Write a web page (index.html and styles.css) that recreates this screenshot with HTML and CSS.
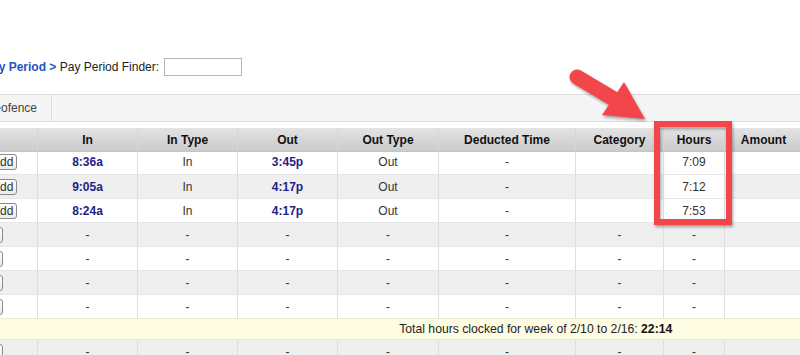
FILE: index.html
```html
<!DOCTYPE html>
<html>
<head>
<meta charset="utf-8">
<link rel="stylesheet" href="styles.css">
</head>
<body>
<div class="page">
  <div class="crumbs"><a class="crumb">Pay Period &gt;</a> Pay Period Finder: <input class="finder" type="text"></div>
  <div class="tabs"><div class="tab">Geofence</div></div>
  <table class="punches">
    <colgroup>
      <col class="c-act"><col class="c-in"><col class="c-in"><col class="c-in"><col class="c-ot"><col class="c-ded"><col class="c-cat"><col class="c-hrs"><col class="c-amt"><col class="c-more">
    </colgroup>
    <thead>
      <tr><th></th><th>In</th><th>In Type</th><th>Out</th><th>Out Type</th><th>Deducted Time</th><th>Category</th><th>Hours</th><th>Amount</th><th>Notes</th></tr>
    </thead>
    <tbody>
      <tr class="r1"><td class="act"><button class="btn">Add</button></td><td class="time">8:36a</td><td>In</td><td class="time">3:45p</td><td>Out</td><td>-</td><td></td><td class="hl">7:09</td><td></td><td></td></tr>
      <tr class="alt"><td class="act"><button class="btn">Add</button></td><td class="time">9:05a</td><td>In</td><td class="time">4:17p</td><td>Out</td><td>-</td><td></td><td class="hl">7:12</td><td></td><td></td></tr>
      <tr><td class="act"><button class="btn">Add</button></td><td class="time">8:24a</td><td>In</td><td class="time">4:17p</td><td>Out</td><td>-</td><td></td><td class="hl">7:53</td><td></td><td></td></tr>
      <tr class="alt"><td class="act"><button class="btn">+</button></td><td>-</td><td>-</td><td>-</td><td>-</td><td>-</td><td>-</td><td>-</td><td></td><td></td></tr>
      <tr><td class="act"><button class="btn">+</button></td><td>-</td><td>-</td><td>-</td><td>-</td><td>-</td><td>-</td><td>-</td><td></td><td></td></tr>
      <tr class="alt"><td class="act"><button class="btn">+</button></td><td>-</td><td>-</td><td>-</td><td>-</td><td>-</td><td>-</td><td>-</td><td></td><td></td></tr>
      <tr><td class="act"><button class="btn">+</button></td><td>-</td><td>-</td><td>-</td><td>-</td><td>-</td><td>-</td><td>-</td><td></td><td></td></tr>
      <tr class="total"><td colspan="10">Total hours clocked for week of 2/10 to 2/16: <b>22:14</b></td></tr>
      <tr class="alt"><td class="act"><button class="btn">+</button></td><td>-</td><td>-</td><td>-</td><td>-</td><td>-</td><td>-</td><td>-</td><td></td><td></td></tr>
    </tbody>
  </table>
  <svg class="annot" width="800" height="355" viewBox="0 0 800 355">
    <g class="mark">
      <line x1="577" y1="77" x2="614" y2="99" stroke="#f2464b" stroke-width="15" stroke-linecap="round"/>
      <polygon points="624,82 602,115 645,119" fill="#f2464b"/>
      <rect x="657" y="124" width="72" height="98" fill="none" stroke="#f2464b" stroke-width="6"/>
    </g>
  </svg>
</div>
</body>
</html>
```
FILE: styles.css
```css
html, body {
  margin: 0;
  padding: 0;
  background: #ffffff;
}
body {
  font-family: "Liberation Sans", Arial, sans-serif;
  font-size: 12px;
  color: #333;
  overflow: hidden;
}
.page {
  position: relative;
  width: 800px;
  height: 355px;
  overflow: hidden;
  padding-top: 58px;
  box-sizing: border-box;
}
.crumbs {
  height: 18px;
  line-height: 18px;
  margin-left: -16px;
  white-space: nowrap;
  color: #222;
  font-size: 12px;
}
.crumb {
  color: #1f55c0;
  font-weight: bold;
  text-decoration: none;
}
.finder {
  box-sizing: border-box;
  width: 78px;
  height: 18px;
  margin: 0 0 0 2px;
  padding: 0 2px;
  border: 1px solid #b5b5b5;
  vertical-align: top;
  font: inherit;
}
.tabs {
  margin-top: 18px;
  height: 26px;
  background: #f5f5f5;
  border-top: 1px solid #dcdcdc;
  border-bottom: 1px solid #dcdcdc;
  display: flex;
}
.tab {
  margin-left: -25px;
  padding: 0 14px 0 10px;
  line-height: 26px;
  color: #444;
  border-right: 1px solid #dcdcdc;
}
.punches {
  margin-top: 6px;
  margin-left: -20px;
  border-collapse: collapse;
  table-layout: fixed;
  width: 1110px;
}
.c-act { width: 57px; }
.c-in { width: 100px; }
.c-ot { width: 101px; }
.c-ded { width: 137px; }
.c-cat { width: 88px; }
.c-hrs { width: 61px; }
.c-amt { width: 78px; }
.c-more { width: 288px; }
.punches th {
  height: 23px;
  padding: 0;
  font-weight: bold;
  color: #111;
  background: linear-gradient(#e3e3e3, #cbcbcb);
  border-left: 1px solid #d6d6d6;
  border-bottom: 1px solid #c4c4c4;
  text-align: center;
  white-space: nowrap;
}
.punches td {
  height: 23px;
  padding: 0;
  text-align: center;
  color: #333;
  border-left: 1px solid #dedede;
  border-top: 1px solid #e6e6e6;
  white-space: nowrap;
}
.punches tr.r1 td {
  height: 20px;
  border-top: none;
  padding-bottom: 2px;
}
.punches tr.alt td {
  background: #efefef;
}
.punches td.act {
  text-align: left;
  padding-left: 7px;
}
.punches td.time {
  color: #1c2388;
  font-weight: bold;
}
.punches tr td.hl {
  background: #ffffff;
}
.punches tr.total td {
  height: 20px;
  background: #fefce2;
  color: #222;
  border-top: 1px solid #ece9cf;
  font-size: 12.2px;
}
.punches tr.total b {
  color: #111;
}
.btn {
  display: block;
  box-sizing: border-box;
  height: 16px;
  padding: 0 3px;
  margin: 0;
  border: 1px solid #8a8a8a;
  border-radius: 3px;
  background: linear-gradient(#ffffff, #ececec);
  font-family: "Liberation Sans", Arial, sans-serif;
  font-size: 12px;
  line-height: 14px;
  color: #333;
}
.annot {
  position: absolute;
  top: 0;
  left: 0;
  pointer-events: none;
}
.mark {
  filter: drop-shadow(1px 2px 1.5px rgba(0, 0, 0, 0.35));
}
```
